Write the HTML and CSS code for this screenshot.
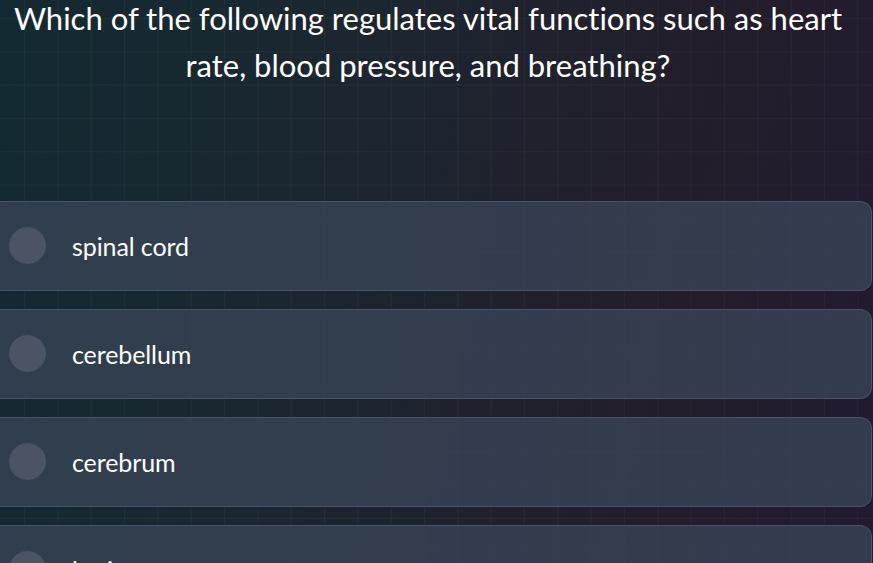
FILE: index.html
```html
<!DOCTYPE html>
<html>
<head>
<meta charset="utf-8">
<link rel="stylesheet" href="styles.css">
</head>
<body>
<div class="page">
  <h1 class="question">Which of the following regulates vital functions such as heart rate, blood pressure, and breathing?</h1>
  <div class="options">
    <div class="option"><span class="radio"></span><span class="label">spinal cord</span></div>
    <div class="option"><span class="radio"></span><span class="label">cerebellum</span></div>
    <div class="option"><span class="radio"></span><span class="label">cerebrum</span></div>
    <div class="option"><span class="radio"></span><span class="label">brainstem</span></div>
  </div>
</div>
</body>
</html>
```
FILE: styles.css
```css
html, body {
  margin: 0;
  padding: 0;
  height: 100%;
  overflow: hidden;
}
body {
  font-family: Lato, "Open Sans", sans-serif;
  font-variant-ligatures: none;
  color: #ffffff;
  background-color: #1b2331;
  background-image:
    linear-gradient(rgba(255,255,255,0.035) 1px, transparent 1px),
    linear-gradient(90deg, rgba(255,255,255,0.035) 1px, transparent 1px),
    linear-gradient(100deg, #132a32 0%, #1c2630 40%, #231d2b 75%, #221a30 100%);
  background-size: 33.333px 33.333px, 33.333px 33.333px, 100% 100%;
  background-position: 24px 18px, 24px 18px, 0 0;
}
.page {
  padding-right: 17px;
}
.question {
  margin: -5px 0 0;
  padding: 0 6px;
  font-size: 31px;
  font-weight: 400;
  line-height: 47px;
  text-align: center;
  height: 206px;
}
.options {
  display: flex;
  flex-direction: column;
  gap: 18.5px;
  margin-left: -20px;
  margin-right: -16px;
}
.option {
  box-sizing: border-box;
  height: 89.5px;
  display: flex;
  align-items: center;
  gap: 26px;
  padding-left: 28px;
  background: rgba(56, 68, 86, 0.8);
  border: 1px solid rgba(100, 114, 134, 0.45);
  border-radius: 12px;
}
.radio {
  width: 37px;
  height: 37px;
  border-radius: 50%;
  background: #4a5463;
  flex: none;
}
.label {
  font-size: 25px;
  letter-spacing: -0.1px;
}
```
